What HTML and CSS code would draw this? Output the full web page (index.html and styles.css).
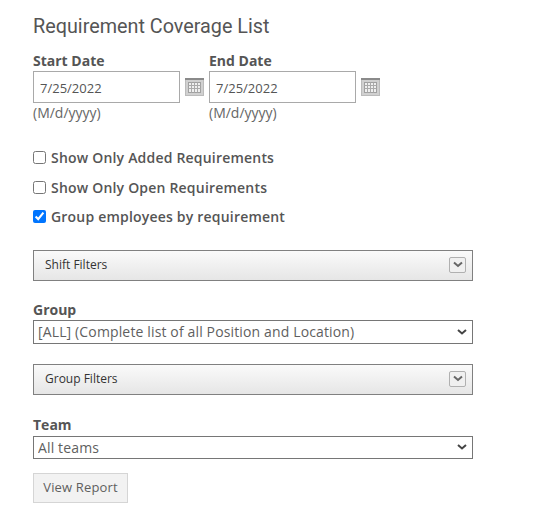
FILE: index.html
```html
<!DOCTYPE html>
<html lang="en">

<head>
    <meta charset="UTF-8">
    <title>Requirement Coverage List</title>
    <link rel="stylesheet" href="styles.css">
</head>

<body>
    <div class="container">
        <h1 class="heading">Requirement Coverage List</h1>

        <div class="dates">
            <div class="date_group">
                <label for="startDate">Start Date</label>
                <div class="date_row">
                    <input type="text" id="startDate" value="7/25/2022">
                    <svg class="cal" width="19" height="18" viewBox="0 0 19 18">
                        <rect x="0.5" y="0.5" width="18" height="17" fill="#d0d0d0" stroke="#bbb"/>
                        <rect x="0" y="0" width="19" height="2" fill="#8a8a8a"/>
                        <rect x="3.5" y="4.5" width="12" height="10" fill="#efefef" stroke="#a0a0a0"/>
                        <path d="M6.5 4.5v10M9.5 4.5v10M12.5 4.5v10M3.5 7.5h12M3.5 10.5h12" stroke="#aaa" fill="none"/>
                    </svg>
                </div>
                <span class="hint">(M/d/yyyy)</span>
            </div>
            <div class="date_group">
                <label for="endDate">End Date</label>
                <div class="date_row">
                    <input type="text" id="endDate" value="7/25/2022">
                    <svg class="cal" width="19" height="18" viewBox="0 0 19 18">
                        <rect x="0.5" y="0.5" width="18" height="17" fill="#d0d0d0" stroke="#bbb"/>
                        <rect x="0" y="0" width="19" height="2" fill="#8a8a8a"/>
                        <rect x="3.5" y="4.5" width="12" height="10" fill="#efefef" stroke="#a0a0a0"/>
                        <path d="M6.5 4.5v10M9.5 4.5v10M12.5 4.5v10M3.5 7.5h12M3.5 10.5h12" stroke="#aaa" fill="none"/>
                    </svg>
                </div>
                <span class="hint">(M/d/yyyy)</span>
            </div>
        </div>

        <div class="checks">
            <label class="check"><input type="checkbox"> Show Only Added Requirements</label>
            <label class="check"><input type="checkbox"> Show Only Open Requirements</label>
            <label class="check"><input type="checkbox" checked> Group employees by requirement</label>
        </div>

        <div class="panel">
            <span>Shift Filters</span>
            <span class="toggle">
                <svg width="10" height="7" viewBox="0 0 10 7"><path d="M1 1.5l4 3.5 4-3.5" fill="none" stroke="#666" stroke-width="2"/></svg>
            </span>
        </div>

        <div class="field field_group">
            <label for="group">Group</label>
            <select id="group">
                <option>[ALL] (Complete list of all Position and Location)</option>
            </select>
        </div>

        <div class="panel panel_second">
            <span>Group Filters</span>
            <span class="toggle">
                <svg width="10" height="7" viewBox="0 0 10 7"><path d="M1 1.5l4 3.5 4-3.5" fill="none" stroke="#666" stroke-width="2"/></svg>
            </span>
        </div>

        <div class="field field_team">
            <label for="team">Team</label>
            <select id="team" class="select_short">
                <option>All teams</option>
            </select>
        </div>

        <button class="btn">View Report</button>
    </div>
</body>

</html>
```

FILE: styles.css
```css
body {
    margin: 0;
    padding: 0;
    font-family: "Open Sans", Arial, sans-serif;
    font-size: 14px;
    color: #555;
    background-color: #fff;
}

.container {
    width: 440px;
    padding: 16px 0 0 33px;
}

.heading {
    margin: 0;
    font-family: Roboto, Arial, sans-serif;
    font-size: 19.8px;
    font-weight: 400;
    line-height: 22px;
    color: #555;
}

.dates {
    display: flex;
    gap: 5px;
    margin-top: 13px;
}

.date_group {
    display: flex;
    flex-direction: column;
}

.date_group label {
    font-weight: 700;
    line-height: 20px;
}

.field label {
    font-weight: 700;
    line-height: 19px;
}

.date_row {
    display: flex;
    align-items: center;
    gap: 5px;
}

.date_row input {
    width: 147px;
    height: 32px;
    padding: 2px 7px 0 6px;
    border: 1px solid #a9a9a9;
    box-sizing: border-box;
    font-family: inherit;
    font-size: 13px;
    color: #555;
}

.cal {
    display: block;
}

.hint {
    line-height: 20px;
    font-size: 14px;
    color: #666;
}

.checks {
    display: flex;
    flex-direction: column;
    margin-top: 20px;
}

.check {
    display: flex;
    align-items: center;
    height: 29.5px;
    font-weight: 600;
    letter-spacing: 0.2px;
}

.check input {
    width: 13px;
    height: 13px;
    margin: 0 5px 0 0;
}

.panel {
    display: flex;
    justify-content: space-between;
    align-items: center;
    height: 31px;
    margin-top: 18px;
    padding: 0 6px 1px 11px;
    border: 1px solid #808080;
    box-sizing: border-box;
    background: linear-gradient(to bottom, #fafafa, #e6e6e6);
    font-size: 12px;
    color: #333;
}

.toggle {
    display: flex;
    justify-content: center;
    align-items: center;
    width: 17px;
    height: 16px;
    box-sizing: border-box;
    border: 1px solid #b0b0b0;
    border-radius: 2px;
    background-color: #f0f0f0;
}

.field {
    display: flex;
    flex-direction: column;
}

.field_group {
    margin-top: 19px;
}

.field_team {
    margin-top: 20px;
}

.field select {
    width: 440px;
    height: 24px;
    margin-top: 1px;
    padding: 0 0 0 4px;
    border: 1px solid #767676;
    border-radius: 0;
    appearance: none;
    background: #fff url("data:image/svg+xml,%3Csvg xmlns='http://www.w3.org/2000/svg' width='10' height='6' viewBox='0 0 10 6'%3E%3Cpath d='M1 1l4 3.5L9 1' fill='none' stroke='%23444' stroke-width='2'/%3E%3C/svg%3E") no-repeat right 5px center;
    font-family: inherit;
    font-size: 14px;
    letter-spacing: 0.14px;
    color: #5f5f5f;
}

.field .select_short {
    height: 23px;
    margin-top: 2px;
}

.panel_second {
    margin-top: 20px;
}

.btn {
    display: block;
    width: 95px;
    height: 30px;
    margin-top: 14px;
    padding: 0 0 2px;
    border: 1px solid #d5d5d5;
    background-color: #f2f2f2;
    font-family: inherit;
    font-size: 13px;
    letter-spacing: 0.15px;
    color: #5f5f5f;
}
```
